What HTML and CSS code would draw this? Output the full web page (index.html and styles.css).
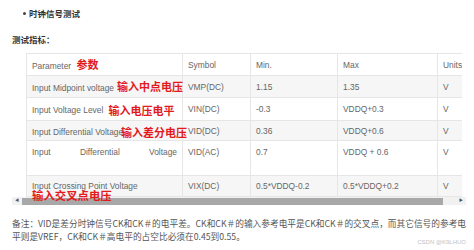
FILE: index.html
```html
<!DOCTYPE html>
<html lang="zh">
<head>
<meta charset="utf-8">
<title>时钟信号测试</title>
<link rel="stylesheet" href="styles.css">
</head>
<body>
<div class="page">
  <div class="heading"><span class="dot"></span><span>时钟信号测试</span></div>
  <div class="label">测试指标：</div>
  <div class="table-wrap">
    <div class="table-clip">
      <table class="spec">
        <colgroup>
          <col class="c1"><col class="c2"><col class="c3"><col class="c4"><col class="c5">
        </colgroup>
        <tr class="r-head">
          <td>Parameter <span class="red">参数</span></td>
          <td>Symbol</td><td>Min.</td><td>Max</td><td>Units</td>
        </tr>
        <tr class="r1 alt">
          <td>Input Midpoint voltage<span class="red">输入中点电压</span></td>
          <td>VMP(DC)</td><td>1.15</td><td>1.35</td><td>V</td>
        </tr>
        <tr class="r2">
          <td>Input Voltage Level <span class="red low">输入电压电平</span></td>
          <td>VIN(DC)</td><td>-0.3</td><td>VDDQ+0.3</td><td>V</td>
        </tr>
        <tr class="r3 alt">
          <td>Input Differential Voltage<span class="red over">输入差分电压</span></td>
          <td>VID(DC)</td><td>0.36</td><td>VDDQ+0.6</td><td>V</td>
        </tr>
        <tr class="r4">
          <td><span class="just">Input Differential Voltage</span></td>
          <td>VID(AC)</td><td>0.7</td><td>VDDQ + 0.6</td><td>V</td>
        </tr>
        <tr class="r5 alt">
          <td>Input Crossing Point Voltage</td>
          <td>VIX(DC)</td><td>0.5*VDDQ-0.2</td><td>0.5*VDDQ+0.2</td><td>V</td>
        </tr>
      </table>
    </div>
    <span class="red red-float">输入交叉点电压</span>
    <div class="scrollbar">
      <span class="arrow">&#9664;</span>
      <span class="thumb"></span>
      <span class="track"></span>
      <span class="arrow">&#9654;</span>
    </div>
  </div>
  <p class="notes">备注：VID是差分时钟信号CK和CK＃的电平差。CK和CK＃的输入参考电平是CK和CK＃的交叉点，而其它信号的参考电平则是VREF，CK和CK＃高电平的占空比必须在0.45到0.55。</p>
  <span class="watermark">CSDN @K9LHUO</span>
</div>
</body>
</html>
```
FILE: styles.css
```css
html, body {
  margin: 0;
  background: #fff;
}
body {
  font-family: "Liberation Sans", "Noto Sans CJK SC", sans-serif;
}
.page {
  position: relative;
  height: 250px;
  box-sizing: border-box;
  padding: 6px 0 0 12px;
  overflow: hidden;
}
.heading {
  display: flex;
  align-items: center;
  gap: 3px;
  margin-left: 11px;
  font: 700 8.5px/14px "Noto Sans CJK SC", sans-serif;
  color: #333;
}
.heading .dot {
  width: 3px;
  height: 3px;
  border-radius: 50%;
  background: #444;
}
.label {
  margin-top: 12px;
  font: 700 8.5px/14px "Noto Sans CJK SC", sans-serif;
  color: #333;
}
.table-wrap {
  position: relative;
  margin-top: 7px;
  width: 454px;
}
.table-clip {
  width: 450px;
  height: 144px;
  overflow: hidden;
}
.spec {
  margin-left: 14px;
  border-collapse: collapse;
  table-layout: fixed;
  width: 471px;
  font-size: 8.4px;
  line-height: 10px;
  color: #666;
  border-top: 1px solid #ececec;
}
.spec .c1 { width: 156px; }
.spec .c2 { width: 68px; }
.spec .c3 { width: 87px; }
.spec .c4 { width: 100px; }
.spec .c5 { width: 60px; }
.spec td {
  border: 1px solid #e6e6e6;
  padding: 0 5px;
  vertical-align: middle;
  white-space: nowrap;
  overflow: visible;
}
.spec tr.alt td { background: #f6f6f6; }
.r-head td { height: 21px; }
.r1 td { height: 21px; }
.r2 td { height: 22px; }
.r3 td { height: 19px; }
.r4 td { height: 35px; vertical-align: top; padding-top: 6px; box-sizing: border-box; }
.r5 td { height: 21px; vertical-align: top; padding-top: 5px; box-sizing: border-box; }
.just {
  display: block;
  white-space: normal;
  text-align: justify;
  text-align-last: justify;
}
.red {
  position: relative;
  color: #e3191c;
  font: 700 11px/10px "Noto Sans CJK SC", serif;
  margin-left: 3px;
}
.red.low { top: 2px; }
.red.over { margin-left: -2px; top: 2px; }
.red-float {
  position: absolute;
  left: 20px;
  top: 136px;
  margin: 0;
  font-size: 11.4px;
  line-height: 12px;
}
.scrollbar {
  display: flex;
  align-items: center;
  height: 8px;
  width: 454px;
  background: #f1f1f1;
}
.scrollbar .arrow {
  width: 10px;
  font-size: 4px;
  line-height: 8px;
  text-align: center;
  color: #555;
}
.scrollbar .thumb {
  width: 421px;
  height: 7px;
  background: #a8a8a8;
}
.scrollbar .track { flex: 1; }
.notes {
  margin: 12px 0 0;
  width: 458px;
  font: 400 8.7px/13px "Noto Sans CJK SC", sans-serif;
  color: #555;
}
.watermark {
  position: absolute;
  right: 8px;
  top: 238px;
  font: 400 6px/8px "Liberation Sans", sans-serif;
  color: #c2c2c2;
}
```
